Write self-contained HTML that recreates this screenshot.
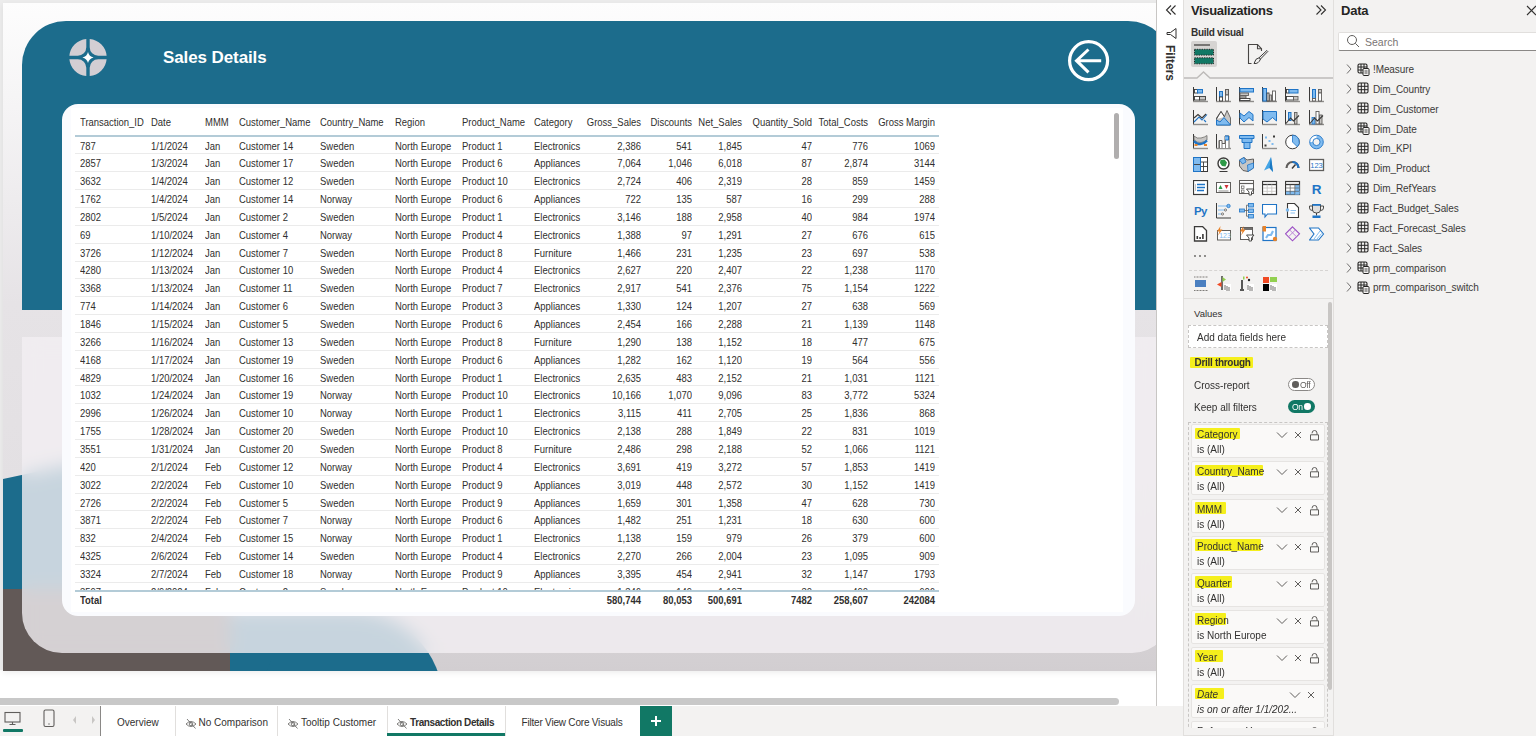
<!DOCTYPE html><html><head><meta charset='utf-8'><title>Sales Details</title><style>
*{margin:0;padding:0;box-sizing:border-box}
html,body{width:1536px;height:736px;overflow:hidden;background:#f3f2f1;font-family:"Liberation Sans",sans-serif;color:#252423}
.a{position:absolute}
.t{position:absolute;white-space:nowrap;line-height:1}
.c{position:absolute;white-space:nowrap;line-height:1;font-size:11px;color:#302f2e;transform:scaleX(.86);transform-origin:0 0}
.cr{position:absolute;white-space:nowrap;line-height:1;font-size:11px;color:#302f2e;transform:scaleX(.86);transform-origin:100% 0;text-align:right;width:100px}
.b{font-weight:bold}
</style></head><body>
<div class='a' style='left:0;top:0;width:1157px;height:706px;background:#ffffff;overflow:hidden'>
<div class='a' style='left:3px;top:3px;width:1188px;height:668px;box-shadow:-2px -2px 1px 1px rgba(0,0,0,0.075),0 2px 6px rgba(0,0,0,0.07)'></div>
<div class='a' id='page' style='left:3px;top:3px;width:1188px;height:668px;overflow:hidden;background:#fefefe'>
<div class='a' style='left:0;top:0;width:1188px;height:668px;background:linear-gradient(to bottom,#fdfdfd 0px,#e6e3e6 300px,#e3e0e3 480px,#d2ced1 668px)'></div>
<div class='a' style='left:19px;top:18px;width:1150px;height:289px;background:#1c6c8c;border-radius:44px 44px 0 0'></div>
<div class='a' style='left:0;top:476px;width:90px;height:125px;background:#1c6c8c;transform:skewY(-12deg);transform-origin:0 0'></div>
<div class='a' style='left:0;top:586px;width:227px;height:82px;background:#625957'></div>
<div class='a' style='left:227px;top:608px;width:125px;height:60px;background:#1c6c8c'></div>
<div class='a' style='left:258px;top:608px;width:182px;height:182px;background:#1c6c8c;border-radius:50%'></div>
<div class='a' style='left:19px;top:334px;width:1150px;height:316px;background:rgba(243,239,242,0.8);border-radius:0 0 40px 40px;backdrop-filter:blur(9px);-webkit-backdrop-filter:blur(9px)'></div>
<div class='a' style='left:59px;top:101px;width:1073px;height:512px;background:#fafbfe;border-radius:16px'></div>
<div class='a' style='left:68px;top:105px;width:1052px;height:504px;background:#ffffff'></div>
</div>
</div>
<svg class='a' style='left:66px;top:36px' width='44' height='44' viewBox='0 0 44 44'>
<path d='M20.30 2.88L20.30 11.30A8.5 8.5 0 0 1 11.80 19.80L3.38 19.80A18.7 18.7 0 0 1 20.30 2.88ZM23.70 2.88L23.70 11.30A8.5 8.5 0 0 0 32.20 19.80L40.62 19.80A18.7 18.7 0 0 0 23.70 2.88ZM23.70 40.12L23.70 31.70A8.5 8.5 0 0 1 32.20 23.20L40.62 23.20A18.7 18.7 0 0 1 23.70 40.12ZM20.30 40.12L20.30 31.70A8.5 8.5 0 0 0 11.80 23.20L3.38 23.20A18.7 18.7 0 0 0 20.30 40.12Z' fill='#d3ced3'/>
<path d='M22 15.9Q23.1 20.4 27.6 21.5Q23.1 22.6 22 27.1Q20.9 22.6 16.4 21.5Q20.9 20.4 22 15.9Z' fill='#ffffff'/>
</svg>
<div class='t' style='left:163px;top:49px;font-size:17px;font-weight:bold;color:#ffffff;letter-spacing:-0.1px'>Sales Details</div>
<svg class='a' style='left:1066px;top:38px' width='46' height='46' viewBox='0 0 46 46'>
<circle cx='22.6' cy='22.7' r='19' fill='none' stroke='#fff' stroke-width='3.2'/>
<path d='M10 22.7 H35.2 M22.5 11.5 L10.5 22.7 L22.5 34.3' fill='none' stroke='#fff' stroke-width='3'/>
</svg>
<div class='c' style='left:79.5px;top:117px'>Transaction_ID</div>
<div class='c' style='left:151px;top:117px'>Date</div>
<div class='c' style='left:204.5px;top:117px'>MMM</div>
<div class='c' style='left:239.4px;top:117px'>Customer_Name</div>
<div class='c' style='left:320.2px;top:117px'>Country_Name</div>
<div class='c' style='left:394.5px;top:117px'>Region</div>
<div class='c' style='left:461.8px;top:117px'>Product_Name</div>
<div class='c' style='left:534.3px;top:117px'>Category</div>
<div class='cr' style='left:541.2px;top:117px'>Gross_Sales</div>
<div class='cr' style='left:591.9px;top:117px'>Discounts</div>
<div class='cr' style='left:642.3px;top:117px'>Net_Sales</div>
<div class='cr' style='left:711.7px;top:117px'>Quantity_Sold</div>
<div class='cr' style='left:768.1px;top:117px'>Total_Costs</div>
<div class='cr' style='left:834.9px;top:117px'>Gross Margin</div>
<div class='a' style='left:75px;top:134.5px;width:864px;height:2px;background:#b3cbd7'></div>
<div class='a' style='left:0;top:136.5px;width:1000px;height:453.5px;overflow:hidden'>
<div class='c' style='left:79.5px;top:4.00px'>787</div>
<div class='c' style='left:151px;top:4.00px'>1/1/2024</div>
<div class='c' style='left:204.5px;top:4.00px'>Jan</div>
<div class='c' style='left:239.4px;top:4.00px'>Customer 14</div>
<div class='c' style='left:320.2px;top:4.00px'>Sweden</div>
<div class='c' style='left:394.5px;top:4.00px'>North Europe</div>
<div class='c' style='left:461.8px;top:4.00px'>Product 1</div>
<div class='c' style='left:534.3px;top:4.00px'>Electronics</div>
<div class='cr' style='left:541.2px;top:4.00px'>2,386</div>
<div class='cr' style='left:591.9px;top:4.00px'>541</div>
<div class='cr' style='left:642.3px;top:4.00px'>1,845</div>
<div class='cr' style='left:711.7px;top:4.00px'>47</div>
<div class='cr' style='left:768.1px;top:4.00px'>776</div>
<div class='cr' style='left:834.9px;top:4.00px'>1069</div>
<div class='a' style='left:75px;top:16.90px;width:864px;height:1px;background:#ebebeb'></div>
<div class='c' style='left:79.5px;top:21.85px'>2857</div>
<div class='c' style='left:151px;top:21.85px'>1/3/2024</div>
<div class='c' style='left:204.5px;top:21.85px'>Jan</div>
<div class='c' style='left:239.4px;top:21.85px'>Customer 17</div>
<div class='c' style='left:320.2px;top:21.85px'>Sweden</div>
<div class='c' style='left:394.5px;top:21.85px'>North Europe</div>
<div class='c' style='left:461.8px;top:21.85px'>Product 6</div>
<div class='c' style='left:534.3px;top:21.85px'>Appliances</div>
<div class='cr' style='left:541.2px;top:21.85px'>7,064</div>
<div class='cr' style='left:591.9px;top:21.85px'>1,046</div>
<div class='cr' style='left:642.3px;top:21.85px'>6,018</div>
<div class='cr' style='left:711.7px;top:21.85px'>87</div>
<div class='cr' style='left:768.1px;top:21.85px'>2,874</div>
<div class='cr' style='left:834.9px;top:21.85px'>3144</div>
<div class='a' style='left:75px;top:34.75px;width:864px;height:1px;background:#ebebeb'></div>
<div class='c' style='left:79.5px;top:39.70px'>3632</div>
<div class='c' style='left:151px;top:39.70px'>1/4/2024</div>
<div class='c' style='left:204.5px;top:39.70px'>Jan</div>
<div class='c' style='left:239.4px;top:39.70px'>Customer 12</div>
<div class='c' style='left:320.2px;top:39.70px'>Sweden</div>
<div class='c' style='left:394.5px;top:39.70px'>North Europe</div>
<div class='c' style='left:461.8px;top:39.70px'>Product 10</div>
<div class='c' style='left:534.3px;top:39.70px'>Electronics</div>
<div class='cr' style='left:541.2px;top:39.70px'>2,724</div>
<div class='cr' style='left:591.9px;top:39.70px'>406</div>
<div class='cr' style='left:642.3px;top:39.70px'>2,319</div>
<div class='cr' style='left:711.7px;top:39.70px'>28</div>
<div class='cr' style='left:768.1px;top:39.70px'>859</div>
<div class='cr' style='left:834.9px;top:39.70px'>1459</div>
<div class='a' style='left:75px;top:52.60px;width:864px;height:1px;background:#ebebeb'></div>
<div class='c' style='left:79.5px;top:57.55px'>1762</div>
<div class='c' style='left:151px;top:57.55px'>1/4/2024</div>
<div class='c' style='left:204.5px;top:57.55px'>Jan</div>
<div class='c' style='left:239.4px;top:57.55px'>Customer 14</div>
<div class='c' style='left:320.2px;top:57.55px'>Norway</div>
<div class='c' style='left:394.5px;top:57.55px'>North Europe</div>
<div class='c' style='left:461.8px;top:57.55px'>Product 6</div>
<div class='c' style='left:534.3px;top:57.55px'>Appliances</div>
<div class='cr' style='left:541.2px;top:57.55px'>722</div>
<div class='cr' style='left:591.9px;top:57.55px'>135</div>
<div class='cr' style='left:642.3px;top:57.55px'>587</div>
<div class='cr' style='left:711.7px;top:57.55px'>16</div>
<div class='cr' style='left:768.1px;top:57.55px'>299</div>
<div class='cr' style='left:834.9px;top:57.55px'>288</div>
<div class='a' style='left:75px;top:70.45px;width:864px;height:1px;background:#ebebeb'></div>
<div class='c' style='left:79.5px;top:75.40px'>2802</div>
<div class='c' style='left:151px;top:75.40px'>1/5/2024</div>
<div class='c' style='left:204.5px;top:75.40px'>Jan</div>
<div class='c' style='left:239.4px;top:75.40px'>Customer 2</div>
<div class='c' style='left:320.2px;top:75.40px'>Sweden</div>
<div class='c' style='left:394.5px;top:75.40px'>North Europe</div>
<div class='c' style='left:461.8px;top:75.40px'>Product 1</div>
<div class='c' style='left:534.3px;top:75.40px'>Electronics</div>
<div class='cr' style='left:541.2px;top:75.40px'>3,146</div>
<div class='cr' style='left:591.9px;top:75.40px'>188</div>
<div class='cr' style='left:642.3px;top:75.40px'>2,958</div>
<div class='cr' style='left:711.7px;top:75.40px'>40</div>
<div class='cr' style='left:768.1px;top:75.40px'>984</div>
<div class='cr' style='left:834.9px;top:75.40px'>1974</div>
<div class='a' style='left:75px;top:88.30px;width:864px;height:1px;background:#ebebeb'></div>
<div class='c' style='left:79.5px;top:93.25px'>69</div>
<div class='c' style='left:151px;top:93.25px'>1/10/2024</div>
<div class='c' style='left:204.5px;top:93.25px'>Jan</div>
<div class='c' style='left:239.4px;top:93.25px'>Customer 4</div>
<div class='c' style='left:320.2px;top:93.25px'>Norway</div>
<div class='c' style='left:394.5px;top:93.25px'>North Europe</div>
<div class='c' style='left:461.8px;top:93.25px'>Product 4</div>
<div class='c' style='left:534.3px;top:93.25px'>Electronics</div>
<div class='cr' style='left:541.2px;top:93.25px'>1,388</div>
<div class='cr' style='left:591.9px;top:93.25px'>97</div>
<div class='cr' style='left:642.3px;top:93.25px'>1,291</div>
<div class='cr' style='left:711.7px;top:93.25px'>27</div>
<div class='cr' style='left:768.1px;top:93.25px'>676</div>
<div class='cr' style='left:834.9px;top:93.25px'>615</div>
<div class='a' style='left:75px;top:106.15px;width:864px;height:1px;background:#ebebeb'></div>
<div class='c' style='left:79.5px;top:111.10px'>3726</div>
<div class='c' style='left:151px;top:111.10px'>1/12/2024</div>
<div class='c' style='left:204.5px;top:111.10px'>Jan</div>
<div class='c' style='left:239.4px;top:111.10px'>Customer 7</div>
<div class='c' style='left:320.2px;top:111.10px'>Sweden</div>
<div class='c' style='left:394.5px;top:111.10px'>North Europe</div>
<div class='c' style='left:461.8px;top:111.10px'>Product 8</div>
<div class='c' style='left:534.3px;top:111.10px'>Furniture</div>
<div class='cr' style='left:541.2px;top:111.10px'>1,466</div>
<div class='cr' style='left:591.9px;top:111.10px'>231</div>
<div class='cr' style='left:642.3px;top:111.10px'>1,235</div>
<div class='cr' style='left:711.7px;top:111.10px'>23</div>
<div class='cr' style='left:768.1px;top:111.10px'>697</div>
<div class='cr' style='left:834.9px;top:111.10px'>538</div>
<div class='a' style='left:75px;top:124.00px;width:864px;height:1px;background:#ebebeb'></div>
<div class='c' style='left:79.5px;top:128.95px'>4280</div>
<div class='c' style='left:151px;top:128.95px'>1/13/2024</div>
<div class='c' style='left:204.5px;top:128.95px'>Jan</div>
<div class='c' style='left:239.4px;top:128.95px'>Customer 10</div>
<div class='c' style='left:320.2px;top:128.95px'>Sweden</div>
<div class='c' style='left:394.5px;top:128.95px'>North Europe</div>
<div class='c' style='left:461.8px;top:128.95px'>Product 4</div>
<div class='c' style='left:534.3px;top:128.95px'>Electronics</div>
<div class='cr' style='left:541.2px;top:128.95px'>2,627</div>
<div class='cr' style='left:591.9px;top:128.95px'>220</div>
<div class='cr' style='left:642.3px;top:128.95px'>2,407</div>
<div class='cr' style='left:711.7px;top:128.95px'>22</div>
<div class='cr' style='left:768.1px;top:128.95px'>1,238</div>
<div class='cr' style='left:834.9px;top:128.95px'>1170</div>
<div class='a' style='left:75px;top:141.85px;width:864px;height:1px;background:#ebebeb'></div>
<div class='c' style='left:79.5px;top:146.80px'>3368</div>
<div class='c' style='left:151px;top:146.80px'>1/13/2024</div>
<div class='c' style='left:204.5px;top:146.80px'>Jan</div>
<div class='c' style='left:239.4px;top:146.80px'>Customer 11</div>
<div class='c' style='left:320.2px;top:146.80px'>Sweden</div>
<div class='c' style='left:394.5px;top:146.80px'>North Europe</div>
<div class='c' style='left:461.8px;top:146.80px'>Product 7</div>
<div class='c' style='left:534.3px;top:146.80px'>Electronics</div>
<div class='cr' style='left:541.2px;top:146.80px'>2,917</div>
<div class='cr' style='left:591.9px;top:146.80px'>541</div>
<div class='cr' style='left:642.3px;top:146.80px'>2,376</div>
<div class='cr' style='left:711.7px;top:146.80px'>75</div>
<div class='cr' style='left:768.1px;top:146.80px'>1,154</div>
<div class='cr' style='left:834.9px;top:146.80px'>1222</div>
<div class='a' style='left:75px;top:159.70px;width:864px;height:1px;background:#ebebeb'></div>
<div class='c' style='left:79.5px;top:164.65px'>774</div>
<div class='c' style='left:151px;top:164.65px'>1/14/2024</div>
<div class='c' style='left:204.5px;top:164.65px'>Jan</div>
<div class='c' style='left:239.4px;top:164.65px'>Customer 6</div>
<div class='c' style='left:320.2px;top:164.65px'>Sweden</div>
<div class='c' style='left:394.5px;top:164.65px'>North Europe</div>
<div class='c' style='left:461.8px;top:164.65px'>Product 3</div>
<div class='c' style='left:534.3px;top:164.65px'>Appliances</div>
<div class='cr' style='left:541.2px;top:164.65px'>1,330</div>
<div class='cr' style='left:591.9px;top:164.65px'>124</div>
<div class='cr' style='left:642.3px;top:164.65px'>1,207</div>
<div class='cr' style='left:711.7px;top:164.65px'>27</div>
<div class='cr' style='left:768.1px;top:164.65px'>638</div>
<div class='cr' style='left:834.9px;top:164.65px'>569</div>
<div class='a' style='left:75px;top:177.55px;width:864px;height:1px;background:#ebebeb'></div>
<div class='c' style='left:79.5px;top:182.50px'>1846</div>
<div class='c' style='left:151px;top:182.50px'>1/15/2024</div>
<div class='c' style='left:204.5px;top:182.50px'>Jan</div>
<div class='c' style='left:239.4px;top:182.50px'>Customer 5</div>
<div class='c' style='left:320.2px;top:182.50px'>Sweden</div>
<div class='c' style='left:394.5px;top:182.50px'>North Europe</div>
<div class='c' style='left:461.8px;top:182.50px'>Product 6</div>
<div class='c' style='left:534.3px;top:182.50px'>Appliances</div>
<div class='cr' style='left:541.2px;top:182.50px'>2,454</div>
<div class='cr' style='left:591.9px;top:182.50px'>166</div>
<div class='cr' style='left:642.3px;top:182.50px'>2,288</div>
<div class='cr' style='left:711.7px;top:182.50px'>21</div>
<div class='cr' style='left:768.1px;top:182.50px'>1,139</div>
<div class='cr' style='left:834.9px;top:182.50px'>1148</div>
<div class='a' style='left:75px;top:195.40px;width:864px;height:1px;background:#ebebeb'></div>
<div class='c' style='left:79.5px;top:200.35px'>3266</div>
<div class='c' style='left:151px;top:200.35px'>1/16/2024</div>
<div class='c' style='left:204.5px;top:200.35px'>Jan</div>
<div class='c' style='left:239.4px;top:200.35px'>Customer 13</div>
<div class='c' style='left:320.2px;top:200.35px'>Sweden</div>
<div class='c' style='left:394.5px;top:200.35px'>North Europe</div>
<div class='c' style='left:461.8px;top:200.35px'>Product 8</div>
<div class='c' style='left:534.3px;top:200.35px'>Furniture</div>
<div class='cr' style='left:541.2px;top:200.35px'>1,290</div>
<div class='cr' style='left:591.9px;top:200.35px'>138</div>
<div class='cr' style='left:642.3px;top:200.35px'>1,152</div>
<div class='cr' style='left:711.7px;top:200.35px'>18</div>
<div class='cr' style='left:768.1px;top:200.35px'>477</div>
<div class='cr' style='left:834.9px;top:200.35px'>675</div>
<div class='a' style='left:75px;top:213.25px;width:864px;height:1px;background:#ebebeb'></div>
<div class='c' style='left:79.5px;top:218.20px'>4168</div>
<div class='c' style='left:151px;top:218.20px'>1/17/2024</div>
<div class='c' style='left:204.5px;top:218.20px'>Jan</div>
<div class='c' style='left:239.4px;top:218.20px'>Customer 19</div>
<div class='c' style='left:320.2px;top:218.20px'>Sweden</div>
<div class='c' style='left:394.5px;top:218.20px'>North Europe</div>
<div class='c' style='left:461.8px;top:218.20px'>Product 6</div>
<div class='c' style='left:534.3px;top:218.20px'>Appliances</div>
<div class='cr' style='left:541.2px;top:218.20px'>1,282</div>
<div class='cr' style='left:591.9px;top:218.20px'>162</div>
<div class='cr' style='left:642.3px;top:218.20px'>1,120</div>
<div class='cr' style='left:711.7px;top:218.20px'>19</div>
<div class='cr' style='left:768.1px;top:218.20px'>564</div>
<div class='cr' style='left:834.9px;top:218.20px'>556</div>
<div class='a' style='left:75px;top:231.10px;width:864px;height:1px;background:#ebebeb'></div>
<div class='c' style='left:79.5px;top:236.05px'>4829</div>
<div class='c' style='left:151px;top:236.05px'>1/20/2024</div>
<div class='c' style='left:204.5px;top:236.05px'>Jan</div>
<div class='c' style='left:239.4px;top:236.05px'>Customer 16</div>
<div class='c' style='left:320.2px;top:236.05px'>Sweden</div>
<div class='c' style='left:394.5px;top:236.05px'>North Europe</div>
<div class='c' style='left:461.8px;top:236.05px'>Product 1</div>
<div class='c' style='left:534.3px;top:236.05px'>Electronics</div>
<div class='cr' style='left:541.2px;top:236.05px'>2,635</div>
<div class='cr' style='left:591.9px;top:236.05px'>483</div>
<div class='cr' style='left:642.3px;top:236.05px'>2,152</div>
<div class='cr' style='left:711.7px;top:236.05px'>21</div>
<div class='cr' style='left:768.1px;top:236.05px'>1,031</div>
<div class='cr' style='left:834.9px;top:236.05px'>1121</div>
<div class='a' style='left:75px;top:248.95px;width:864px;height:1px;background:#ebebeb'></div>
<div class='c' style='left:79.5px;top:253.90px'>1032</div>
<div class='c' style='left:151px;top:253.90px'>1/24/2024</div>
<div class='c' style='left:204.5px;top:253.90px'>Jan</div>
<div class='c' style='left:239.4px;top:253.90px'>Customer 19</div>
<div class='c' style='left:320.2px;top:253.90px'>Norway</div>
<div class='c' style='left:394.5px;top:253.90px'>North Europe</div>
<div class='c' style='left:461.8px;top:253.90px'>Product 10</div>
<div class='c' style='left:534.3px;top:253.90px'>Electronics</div>
<div class='cr' style='left:541.2px;top:253.90px'>10,166</div>
<div class='cr' style='left:591.9px;top:253.90px'>1,070</div>
<div class='cr' style='left:642.3px;top:253.90px'>9,096</div>
<div class='cr' style='left:711.7px;top:253.90px'>83</div>
<div class='cr' style='left:768.1px;top:253.90px'>3,772</div>
<div class='cr' style='left:834.9px;top:253.90px'>5324</div>
<div class='a' style='left:75px;top:266.80px;width:864px;height:1px;background:#ebebeb'></div>
<div class='c' style='left:79.5px;top:271.75px'>2996</div>
<div class='c' style='left:151px;top:271.75px'>1/26/2024</div>
<div class='c' style='left:204.5px;top:271.75px'>Jan</div>
<div class='c' style='left:239.4px;top:271.75px'>Customer 10</div>
<div class='c' style='left:320.2px;top:271.75px'>Norway</div>
<div class='c' style='left:394.5px;top:271.75px'>North Europe</div>
<div class='c' style='left:461.8px;top:271.75px'>Product 1</div>
<div class='c' style='left:534.3px;top:271.75px'>Electronics</div>
<div class='cr' style='left:541.2px;top:271.75px'>3,115</div>
<div class='cr' style='left:591.9px;top:271.75px'>411</div>
<div class='cr' style='left:642.3px;top:271.75px'>2,705</div>
<div class='cr' style='left:711.7px;top:271.75px'>25</div>
<div class='cr' style='left:768.1px;top:271.75px'>1,836</div>
<div class='cr' style='left:834.9px;top:271.75px'>868</div>
<div class='a' style='left:75px;top:284.65px;width:864px;height:1px;background:#ebebeb'></div>
<div class='c' style='left:79.5px;top:289.60px'>1755</div>
<div class='c' style='left:151px;top:289.60px'>1/28/2024</div>
<div class='c' style='left:204.5px;top:289.60px'>Jan</div>
<div class='c' style='left:239.4px;top:289.60px'>Customer 20</div>
<div class='c' style='left:320.2px;top:289.60px'>Sweden</div>
<div class='c' style='left:394.5px;top:289.60px'>North Europe</div>
<div class='c' style='left:461.8px;top:289.60px'>Product 10</div>
<div class='c' style='left:534.3px;top:289.60px'>Electronics</div>
<div class='cr' style='left:541.2px;top:289.60px'>2,138</div>
<div class='cr' style='left:591.9px;top:289.60px'>288</div>
<div class='cr' style='left:642.3px;top:289.60px'>1,849</div>
<div class='cr' style='left:711.7px;top:289.60px'>22</div>
<div class='cr' style='left:768.1px;top:289.60px'>831</div>
<div class='cr' style='left:834.9px;top:289.60px'>1019</div>
<div class='a' style='left:75px;top:302.50px;width:864px;height:1px;background:#ebebeb'></div>
<div class='c' style='left:79.5px;top:307.45px'>3551</div>
<div class='c' style='left:151px;top:307.45px'>1/31/2024</div>
<div class='c' style='left:204.5px;top:307.45px'>Jan</div>
<div class='c' style='left:239.4px;top:307.45px'>Customer 20</div>
<div class='c' style='left:320.2px;top:307.45px'>Sweden</div>
<div class='c' style='left:394.5px;top:307.45px'>North Europe</div>
<div class='c' style='left:461.8px;top:307.45px'>Product 8</div>
<div class='c' style='left:534.3px;top:307.45px'>Furniture</div>
<div class='cr' style='left:541.2px;top:307.45px'>2,486</div>
<div class='cr' style='left:591.9px;top:307.45px'>298</div>
<div class='cr' style='left:642.3px;top:307.45px'>2,188</div>
<div class='cr' style='left:711.7px;top:307.45px'>52</div>
<div class='cr' style='left:768.1px;top:307.45px'>1,066</div>
<div class='cr' style='left:834.9px;top:307.45px'>1121</div>
<div class='a' style='left:75px;top:320.35px;width:864px;height:1px;background:#ebebeb'></div>
<div class='c' style='left:79.5px;top:325.30px'>420</div>
<div class='c' style='left:151px;top:325.30px'>2/1/2024</div>
<div class='c' style='left:204.5px;top:325.30px'>Feb</div>
<div class='c' style='left:239.4px;top:325.30px'>Customer 12</div>
<div class='c' style='left:320.2px;top:325.30px'>Norway</div>
<div class='c' style='left:394.5px;top:325.30px'>North Europe</div>
<div class='c' style='left:461.8px;top:325.30px'>Product 4</div>
<div class='c' style='left:534.3px;top:325.30px'>Electronics</div>
<div class='cr' style='left:541.2px;top:325.30px'>3,691</div>
<div class='cr' style='left:591.9px;top:325.30px'>419</div>
<div class='cr' style='left:642.3px;top:325.30px'>3,272</div>
<div class='cr' style='left:711.7px;top:325.30px'>57</div>
<div class='cr' style='left:768.1px;top:325.30px'>1,853</div>
<div class='cr' style='left:834.9px;top:325.30px'>1419</div>
<div class='a' style='left:75px;top:338.20px;width:864px;height:1px;background:#ebebeb'></div>
<div class='c' style='left:79.5px;top:343.15px'>3022</div>
<div class='c' style='left:151px;top:343.15px'>2/2/2024</div>
<div class='c' style='left:204.5px;top:343.15px'>Feb</div>
<div class='c' style='left:239.4px;top:343.15px'>Customer 10</div>
<div class='c' style='left:320.2px;top:343.15px'>Sweden</div>
<div class='c' style='left:394.5px;top:343.15px'>North Europe</div>
<div class='c' style='left:461.8px;top:343.15px'>Product 9</div>
<div class='c' style='left:534.3px;top:343.15px'>Appliances</div>
<div class='cr' style='left:541.2px;top:343.15px'>3,019</div>
<div class='cr' style='left:591.9px;top:343.15px'>448</div>
<div class='cr' style='left:642.3px;top:343.15px'>2,572</div>
<div class='cr' style='left:711.7px;top:343.15px'>30</div>
<div class='cr' style='left:768.1px;top:343.15px'>1,152</div>
<div class='cr' style='left:834.9px;top:343.15px'>1419</div>
<div class='a' style='left:75px;top:356.05px;width:864px;height:1px;background:#ebebeb'></div>
<div class='c' style='left:79.5px;top:361.00px'>2726</div>
<div class='c' style='left:151px;top:361.00px'>2/2/2024</div>
<div class='c' style='left:204.5px;top:361.00px'>Feb</div>
<div class='c' style='left:239.4px;top:361.00px'>Customer 5</div>
<div class='c' style='left:320.2px;top:361.00px'>Sweden</div>
<div class='c' style='left:394.5px;top:361.00px'>North Europe</div>
<div class='c' style='left:461.8px;top:361.00px'>Product 9</div>
<div class='c' style='left:534.3px;top:361.00px'>Appliances</div>
<div class='cr' style='left:541.2px;top:361.00px'>1,659</div>
<div class='cr' style='left:591.9px;top:361.00px'>301</div>
<div class='cr' style='left:642.3px;top:361.00px'>1,358</div>
<div class='cr' style='left:711.7px;top:361.00px'>47</div>
<div class='cr' style='left:768.1px;top:361.00px'>628</div>
<div class='cr' style='left:834.9px;top:361.00px'>730</div>
<div class='a' style='left:75px;top:373.90px;width:864px;height:1px;background:#ebebeb'></div>
<div class='c' style='left:79.5px;top:378.85px'>3871</div>
<div class='c' style='left:151px;top:378.85px'>2/2/2024</div>
<div class='c' style='left:204.5px;top:378.85px'>Feb</div>
<div class='c' style='left:239.4px;top:378.85px'>Customer 7</div>
<div class='c' style='left:320.2px;top:378.85px'>Norway</div>
<div class='c' style='left:394.5px;top:378.85px'>North Europe</div>
<div class='c' style='left:461.8px;top:378.85px'>Product 6</div>
<div class='c' style='left:534.3px;top:378.85px'>Appliances</div>
<div class='cr' style='left:541.2px;top:378.85px'>1,482</div>
<div class='cr' style='left:591.9px;top:378.85px'>251</div>
<div class='cr' style='left:642.3px;top:378.85px'>1,231</div>
<div class='cr' style='left:711.7px;top:378.85px'>18</div>
<div class='cr' style='left:768.1px;top:378.85px'>630</div>
<div class='cr' style='left:834.9px;top:378.85px'>600</div>
<div class='a' style='left:75px;top:391.75px;width:864px;height:1px;background:#ebebeb'></div>
<div class='c' style='left:79.5px;top:396.70px'>832</div>
<div class='c' style='left:151px;top:396.70px'>2/4/2024</div>
<div class='c' style='left:204.5px;top:396.70px'>Feb</div>
<div class='c' style='left:239.4px;top:396.70px'>Customer 15</div>
<div class='c' style='left:320.2px;top:396.70px'>Norway</div>
<div class='c' style='left:394.5px;top:396.70px'>North Europe</div>
<div class='c' style='left:461.8px;top:396.70px'>Product 1</div>
<div class='c' style='left:534.3px;top:396.70px'>Electronics</div>
<div class='cr' style='left:541.2px;top:396.70px'>1,138</div>
<div class='cr' style='left:591.9px;top:396.70px'>159</div>
<div class='cr' style='left:642.3px;top:396.70px'>979</div>
<div class='cr' style='left:711.7px;top:396.70px'>26</div>
<div class='cr' style='left:768.1px;top:396.70px'>379</div>
<div class='cr' style='left:834.9px;top:396.70px'>600</div>
<div class='a' style='left:75px;top:409.60px;width:864px;height:1px;background:#ebebeb'></div>
<div class='c' style='left:79.5px;top:414.55px'>4325</div>
<div class='c' style='left:151px;top:414.55px'>2/6/2024</div>
<div class='c' style='left:204.5px;top:414.55px'>Feb</div>
<div class='c' style='left:239.4px;top:414.55px'>Customer 14</div>
<div class='c' style='left:320.2px;top:414.55px'>Sweden</div>
<div class='c' style='left:394.5px;top:414.55px'>North Europe</div>
<div class='c' style='left:461.8px;top:414.55px'>Product 4</div>
<div class='c' style='left:534.3px;top:414.55px'>Electronics</div>
<div class='cr' style='left:541.2px;top:414.55px'>2,270</div>
<div class='cr' style='left:591.9px;top:414.55px'>266</div>
<div class='cr' style='left:642.3px;top:414.55px'>2,004</div>
<div class='cr' style='left:711.7px;top:414.55px'>23</div>
<div class='cr' style='left:768.1px;top:414.55px'>1,095</div>
<div class='cr' style='left:834.9px;top:414.55px'>909</div>
<div class='a' style='left:75px;top:427.45px;width:864px;height:1px;background:#ebebeb'></div>
<div class='c' style='left:79.5px;top:432.40px'>3324</div>
<div class='c' style='left:151px;top:432.40px'>2/7/2024</div>
<div class='c' style='left:204.5px;top:432.40px'>Feb</div>
<div class='c' style='left:239.4px;top:432.40px'>Customer 18</div>
<div class='c' style='left:320.2px;top:432.40px'>Norway</div>
<div class='c' style='left:394.5px;top:432.40px'>North Europe</div>
<div class='c' style='left:461.8px;top:432.40px'>Product 9</div>
<div class='c' style='left:534.3px;top:432.40px'>Appliances</div>
<div class='cr' style='left:541.2px;top:432.40px'>3,395</div>
<div class='cr' style='left:591.9px;top:432.40px'>454</div>
<div class='cr' style='left:642.3px;top:432.40px'>2,941</div>
<div class='cr' style='left:711.7px;top:432.40px'>32</div>
<div class='cr' style='left:768.1px;top:432.40px'>1,147</div>
<div class='cr' style='left:834.9px;top:432.40px'>1793</div>
<div class='a' style='left:75px;top:445.30px;width:864px;height:1px;background:#ebebeb'></div>
<div class='c' style='left:79.5px;top:450.25px'>3597</div>
<div class='c' style='left:151px;top:450.25px'>2/9/2024</div>
<div class='c' style='left:204.5px;top:450.25px'>Feb</div>
<div class='c' style='left:239.4px;top:450.25px'>Customer 2</div>
<div class='c' style='left:320.2px;top:450.25px'>Sweden</div>
<div class='c' style='left:394.5px;top:450.25px'>North Europe</div>
<div class='c' style='left:461.8px;top:450.25px'>Product 10</div>
<div class='c' style='left:534.3px;top:450.25px'>Electronics</div>
<div class='cr' style='left:541.2px;top:450.25px'>1,346</div>
<div class='cr' style='left:591.9px;top:450.25px'>149</div>
<div class='cr' style='left:642.3px;top:450.25px'>1,197</div>
<div class='cr' style='left:711.7px;top:450.25px'>30</div>
<div class='cr' style='left:768.1px;top:450.25px'>490</div>
<div class='cr' style='left:834.9px;top:450.25px'>606</div>
<div class='a' style='left:75px;top:463.15px;width:864px;height:1px;background:#ebebeb'></div>
</div>
<div class='a' style='left:75px;top:590px;width:864px;height:2px;background:#b3cbd7'></div>
<div class='c b' style='left:80px;top:595px'>Total</div>
<div class='cr b' style='left:541.2px;top:595px'>580,744</div>
<div class='cr b' style='left:591.9px;top:595px'>80,053</div>
<div class='cr b' style='left:642.3px;top:595px'>500,691</div>
<div class='cr b' style='left:711.7px;top:595px'>7482</div>
<div class='cr b' style='left:768.1px;top:595px'>258,607</div>
<div class='cr b' style='left:834.9px;top:595px'>242084</div>
<div class='a' style='left:1114px;top:113px;width:5px;height:46px;background:#b0aeae;border-radius:3px'></div>
<div class='a' style='left:0;top:698px;width:1119px;height:7px;background:#c8c8c8;border-radius:0 4px 4px 0'></div>
<div class='a' style='left:1156px;top:0;width:28px;height:706px;background:#ffffff;border-left:1px solid #c8c6c4'></div>
<svg class='a' style='left:1164px;top:4px' width='14' height='12' viewBox='0 0 14 12'><path d='M7 1.5 L2.5 6 L7 10.5 M11.5 1.5 L7 6 L11.5 10.5' fill='none' stroke='#323130' stroke-width='1.1'/></svg>
<svg class='a' style='left:1164px;top:27px' width='14' height='13' viewBox='0 0 14 13'><path d='M12 1.5 V11.5 L6.5 7.5 H3 V5.5 H6.5 Z' fill='none' stroke='#323130' stroke-width='1' stroke-linejoin='round'/></svg>
<div class='t' style='left:1163px;top:45px;font-size:12px;font-weight:bold;color:#323130;transform:rotate(90deg) translate(0,-13px);transform-origin:0 0'>Filters</div>
<div class='a' style='left:1183px;top:0;width:151px;height:736px;background:#f3f2f1;border-left:1px solid #e1dfdd;border-right:1px solid #e1dfdd'></div>
<div class='t' style='left:1191px;top:4px;font-size:13px;font-weight:bold;color:#252423;letter-spacing:-0.35px'>Visualizations</div>
<svg class='a' style='left:1314px;top:4px' width='14' height='12' viewBox='0 0 14 12'><path d='M2.5 1.5 L7 6 L2.5 10.5 M7 1.5 L11.5 6 L7 10.5' fill='none' stroke='#323130' stroke-width='1.1'/></svg>
<div class='t' style='left:1191px;top:28px;font-size:10px;font-weight:bold;color:#323130;letter-spacing:-0.3px'>Build visual</div>
<div class='a' style='left:1191px;top:41px;width:26px;height:26px;background:#d6d4d2;border-radius:2px'></div>
<svg class='a' style='left:1193px;top:43px' width='22' height='22' viewBox='0 0 22 22'>
<rect x='1' y='1.2' width='16' height='1.6' fill='#605e5c'/>
<rect x='1.5' y='6.3' width='19' height='5.8' fill='#117865' stroke='#252423' stroke-width='1' stroke-dasharray='1.2 1.2'/>
<rect x='1.5' y='14.8' width='19' height='6' fill='#117865' stroke='#252423' stroke-width='1' stroke-dasharray='1.2 1.2'/>
</svg>
<svg class='a' style='left:1246px;top:43px' width='24' height='23' viewBox='0 0 24 23'>
<path d='M5.5 20.5 H2.5 V1.5 H11.5 L15.5 5.8 V8' fill='none' stroke='#484644' stroke-width='1.1'/>
<path d='M11.5 1.5 V5.8 H15.5' fill='none' stroke='#484644' stroke-width='1.1'/>
<path d='M21.8 8.5 L14.5 16 L13 14.8 L20.8 7.5 Z' fill='#f3f2f1' stroke='#3b3a39' stroke-width='1'/>
<path d='M13 14.8 Q9.5 15 8 20.5 Q12.5 21.2 14.5 16 Z' fill='#f3f2f1' stroke='#3b3a39' stroke-width='1'/>
</svg>
<svg class='a' style='left:1184px;top:70px' width='149' height='10' viewBox='0 0 149 10'>
<path d='M0 8 H13 L19.5 2 L26 8 H149' fill='none' stroke='#bdbbb9' stroke-width='1.4'/></svg>
<svg class='a' style='left:1193px;top:87px' width='16' height='16' viewBox='0 0 16 16'><path d='M.5 0V15' stroke='#3b3a39' stroke-width='1'/><path d='M0 14.5H15' stroke='#8f8d8b' stroke-width='1.4'/><rect x='1.5' y='2.5' width='3' height='3.5' fill='#ffffff' stroke='#3b3a39' stroke-width='0.9'/><rect x='4.5' y='2.5' width='5' height='3.5' fill='#80bbef' stroke='#1f74c6' stroke-width='1'/><rect x='1.5' y='9.5' width='5' height='3.5' fill='#ffffff' stroke='#3b3a39' stroke-width='0.9'/><rect x='6.5' y='9.5' width='6' height='3.5' fill='#c8c6c4' stroke='#3b3a39' stroke-width='0.9'/></svg>
<svg class='a' style='left:1216px;top:87px' width='16' height='16' viewBox='0 0 16 16'><path d='M.5 0V15' stroke='#3b3a39' stroke-width='1'/><path d='M0 14.5H15' stroke='#8f8d8b' stroke-width='1.4'/><rect x='3.5' y='4.5' width='3' height='5.5' fill='#80bbef' stroke='#1f74c6' stroke-width='1'/><rect x='3.5' y='10' width='3' height='4' fill='#ffffff' stroke='#3b3a39' stroke-width='0.9'/><rect x='9.5' y='2.5' width='3' height='5.5' fill='#c8c6c4' stroke='#605e5c' stroke-width='1'/><rect x='9.5' y='8' width='3' height='6' fill='#ffffff' stroke='#605e5c' stroke-width='0.9'/></svg>
<svg class='a' style='left:1239px;top:87px' width='16' height='16' viewBox='0 0 16 16'><path d='M.5 0V15' stroke='#3b3a39' stroke-width='1'/><path d='M0 14.5H15' stroke='#8f8d8b' stroke-width='1.4'/><rect x='1' y='1.5' width='13.5' height='3.5' fill='#80bbef' stroke='#1f74c6' stroke-width='1'/><rect x='1' y='6' width='8.5' height='2.5' fill='#c8c6c4' stroke='#605e5c' stroke-width='0.9'/><rect x='1' y='9' width='6' height='2' fill='#c8c6c4' stroke='#605e5c' stroke-width='0.9'/><rect x='1' y='11.5' width='10' height='2' fill='#ffffff' stroke='#3b3a39' stroke-width='0.9'/></svg>
<svg class='a' style='left:1262px;top:87px' width='16' height='16' viewBox='0 0 16 16'><path d='M.5 0V15' stroke='#3b3a39' stroke-width='1'/><path d='M0 14.5H15' stroke='#8f8d8b' stroke-width='1.4'/><rect x='1' y='1.5' width='3.5' height='12.5' fill='#80bbef' stroke='#1f74c6' stroke-width='1'/><rect x='5' y='6' width='2' height='8' fill='#ffffff' stroke='#3b3a39' stroke-width='0.9'/><rect x='7.5' y='8' width='2' height='6' fill='#c8c6c4' stroke='#605e5c' stroke-width='0.9'/><rect x='10.5' y='4' width='3' height='10' fill='#ffffff' stroke='#605e5c' stroke-width='0.9'/></svg>
<svg class='a' style='left:1285px;top:87px' width='16' height='16' viewBox='0 0 16 16'><path d='M.5 0V15' stroke='#3b3a39' stroke-width='1'/><path d='M0 14.5H15' stroke='#8f8d8b' stroke-width='1.4'/><rect x='1.5' y='2.5' width='2.5' height='3.5' fill='#ffffff' stroke='#3b3a39' stroke-width='0.9'/><rect x='4' y='2.5' width='9' height='3.5' fill='#80bbef' stroke='#1f74c6' stroke-width='1'/><rect x='1.5' y='9.5' width='7' height='3.5' fill='#ffffff' stroke='#3b3a39' stroke-width='0.9'/><rect x='8.5' y='9.5' width='4.5' height='3.5' fill='#c8c6c4' stroke='#605e5c' stroke-width='0.9'/></svg>
<svg class='a' style='left:1309px;top:87px' width='16' height='16' viewBox='0 0 16 16'><path d='M.5 0V15' stroke='#3b3a39' stroke-width='1'/><path d='M0 14.5H15' stroke='#8f8d8b' stroke-width='1.4'/><rect x='3.5' y='2.5' width='3' height='9' fill='#80bbef' stroke='#1f74c6' stroke-width='1'/><rect x='3.5' y='11.5' width='3' height='2.5' fill='#ffffff' stroke='#605e5c' stroke-width='0.9'/><rect x='9.5' y='2.5' width='3' height='3.5' fill='#c8c6c4' stroke='#605e5c' stroke-width='0.9'/><rect x='9.5' y='6' width='3' height='8' fill='#ffffff' stroke='#605e5c' stroke-width='0.9'/></svg>
<svg class='a' style='left:1193px;top:110px' width='16' height='16' viewBox='0 0 16 16'><path d='M.5 0V15' stroke='#3b3a39' stroke-width='1'/><path d='M0 14.5H15' stroke='#8f8d8b' stroke-width='1.4'/><path d='M1 12 L6 7 L9 10 L14 4.5' stroke='#1f74c6' stroke-width='1.1' fill='none'/><path d='M1 8 L5 4.5 L9 8 L13 4' stroke='#3b3a39' stroke-width='1.1' fill='none'/><path d='M11 10 L13 12' stroke='#1f74c6' stroke-width='1.1'/></svg>
<svg class='a' style='left:1216px;top:110px' width='16' height='16' viewBox='0 0 16 16'><path d='M0.5 15V8 L5 1.5 L8.5 6.5 L11 0.5 L14.5 8 V15Z' fill='#c8c6c4' stroke='#605e5c' stroke-width='.9'/><path d='M0.5 9 L5 1.5 L8.5 7' fill='#ffffff' stroke='#3b3a39' stroke-width='.9'/><path d='M0.5 15V10 L4 12 L8 7.5 L14.5 15Z' fill='#80bbef' stroke='#1f74c6' stroke-width='1'/></svg>
<svg class='a' style='left:1239px;top:110px' width='16' height='16' viewBox='0 0 16 16'><path d='M.5 0V15' stroke='#3b3a39' stroke-width='1'/><path d='M0 14.5H15' stroke='#8f8d8b' stroke-width='1.4'/><path d='M1 3 L5 6 L10 1.5 L14 4.5 V11 L10 7.5 L5 12 L1 8Z' fill='#80bbef' stroke='#1f74c6' stroke-width='1'/></svg>
<svg class='a' style='left:1262px;top:110px' width='16' height='16' viewBox='0 0 16 16'><path d='M.5 0V15' stroke='#3b3a39' stroke-width='1'/><path d='M0 14.5H15' stroke='#8f8d8b' stroke-width='1.4'/><path d='M1 1.5 H14.5 V11 L10.5 7.5 L5 12 L1 9Z' fill='#80bbef' stroke='#1f74c6' stroke-width='1'/></svg>
<svg class='a' style='left:1285px;top:110px' width='16' height='16' viewBox='0 0 16 16'><path d='M.5 0V15' stroke='#3b3a39' stroke-width='1'/><path d='M0 14.5H15' stroke='#8f8d8b' stroke-width='1.4'/><rect x='3.5' y='2.5' width='2.5' height='8' fill='#80bbef' stroke='#1f74c6' stroke-width='1'/><rect x='9.5' y='2.5' width='2.5' height='11.5' fill='#c8c6c4' stroke='#605e5c' stroke-width='0.9'/><path d='M1 13.5 L5.5 8 L8.5 11 L14 5.5' stroke='#3b3a39' stroke-width='1.1' fill='none'/></svg>
<svg class='a' style='left:1309px;top:110px' width='16' height='16' viewBox='0 0 16 16'><path d='M.5 0V15' stroke='#3b3a39' stroke-width='1'/><path d='M0 14.5H15' stroke='#8f8d8b' stroke-width='1.4'/><rect x='3' y='7.5' width='3' height='6.5' fill='#80bbef' stroke='#1f74c6' stroke-width='0.8'/><rect x='7' y='1.5' width='3' height='12.5' fill='#ffffff' stroke='#605e5c' stroke-width='0.9'/><rect x='10.5' y='5' width='2.5' height='9' fill='#c8c6c4' stroke='#605e5c' stroke-width='0.9'/><path d='M1 13.5 L5.5 8 L8.5 11 L14 5.5' stroke='#3b3a39' stroke-width='1.1' fill='none'/></svg>
<svg class='a' style='left:1193px;top:134px' width='16' height='16' viewBox='0 0 16 16'><path d='M.5 0V15' stroke='#3b3a39' stroke-width='1'/><path d='M0 14.5H15' stroke='#8f8d8b' stroke-width='1.4'/><path d='M1 2 Q4 5 8 4 Q12 3 14 1.5 V6 Q12 8 8 8.5 Q4 9 1 6Z' fill='#c8c6c4' stroke='#605e5c' stroke-width='.7'/><path d='M1 7 Q4 11 8 10 Q12 9 14 6.5' stroke='#1f74c6' stroke-width='2.2' fill='none'/><rect x='1.5' y='10' width='3' height='2' fill='#e8832a'/><rect x='11' y='10' width='3' height='2' fill='#e8832a'/></svg>
<svg class='a' style='left:1216px;top:134px' width='16' height='16' viewBox='0 0 16 16'><path d='M.5 0V15' stroke='#3b3a39' stroke-width='1'/><path d='M0 14.5H15' stroke='#8f8d8b' stroke-width='1.4'/><path d='M3 14V6.5H6V9.5H9V2H13V14' stroke='#605e5c' stroke-width='1' fill='#ffffff'/><path d='M9 2H12.5V6H9' stroke='#1f74c6' stroke-width='1' fill='#80bbef'/><path d='M3.5 14V7M6 14V9.5M9.5 14V6' stroke='#605e5c' stroke-width='.8'/></svg>
<svg class='a' style='left:1239px;top:134px' width='16' height='16' viewBox='0 0 16 16'><path d='M0.5 1.5H15V4.5H13V8.5H11V14.5H5V8.5H3V4.5H.5Z' fill='#80bbef' stroke='#1f74c6' stroke-width='1'/><path d='M3 4.5H13M5 8.5H11' stroke='#1f74c6' stroke-width='.9'/></svg>
<svg class='a' style='left:1262px;top:134px' width='16' height='16' viewBox='0 0 16 16'><path d='M.5 0V15' stroke='#3b3a39' stroke-width='1'/><path d='M0 14.5H15' stroke='#8f8d8b' stroke-width='1.4'/><rect x='3' y='2.5' width='2' height='2' fill='#80bbef'/><rect x='6.5' y='6' width='2' height='2' fill='#80bbef'/><rect x='9.5' y='9' width='2' height='2' fill='#80bbef'/><rect x='11' y='1.5' width='2' height='2' fill='#3b3a39'/><rect x='2.5' y='10.5' width='2' height='2' fill='#3b3a39'/></svg>
<svg class='a' style='left:1285px;top:134px' width='16' height='16' viewBox='0 0 16 16'><circle cx='7.5' cy='8' r='6.8' fill='#ffffff' stroke='#3b3a39' stroke-width='1'/><path d='M7.5 1.2 A6.8 6.8 0 0 1 12.3 12.8 L7.5 8Z' fill='#80bbef' stroke='#1f74c6' stroke-width='.8'/></svg>
<svg class='a' style='left:1309px;top:134px' width='16' height='16' viewBox='0 0 16 16'><circle cx='7.5' cy='8' r='5.2' fill='none' stroke='#ffffff' stroke-width='3.2'/><path d='M7.5 2.8 A5.2 5.2 0 1 1 2.3 8' fill='none' stroke='#80bbef' stroke-width='3.2'/><circle cx='7.5' cy='8' r='6.8' fill='none' stroke='#1f74c6' stroke-width='.9'/><circle cx='7.5' cy='8' r='3.6' fill='none' stroke='#1f74c6' stroke-width='.9'/></svg>
<svg class='a' style='left:1193px;top:157px' width='16' height='16' viewBox='0 0 16 16'><rect x='.5' y='.5' width='14' height='14' fill='#ffffff' stroke='#3b3a39'/><rect x='1' y='1' width='6.5' height='13.5' fill='#80bbef'/><path d='M.5 7.5H7.5M7.5 .5V14.5M7.5 5H14.5M10.5 5V14.5M7.5 9.5H14.5' stroke='#3b3a39' stroke-width='.9'/><rect x='.5' y='.5' width='7' height='14' fill='none' stroke='#1f74c6'/></svg>
<svg class='a' style='left:1216px;top:157px' width='16' height='16' viewBox='0 0 16 16'><circle cx='7.5' cy='6.5' r='5.5' fill='#ffffff' stroke='#3b3a39' stroke-width='1.4'/><path d='M4.5 3 L8.5 2.5 L11 5.5 L9.5 9.5 L6 9 L4 6Z' fill='#2e9b48'/><path d='M3.5 14.5H11.5' stroke='#3b3a39' stroke-width='1'/></svg>
<svg class='a' style='left:1239px;top:157px' width='16' height='16' viewBox='0 0 16 16'><path d='M.5 3 L5 .5 L8 3 L14.5 2 V11 L9 14.5 L4 13.5 L.5 9Z' fill='#c8c6c4' stroke='#605e5c' stroke-width='1'/><path d='M.5 3 L5 .5 L7 5 L3.5 7Z M8.5 8 L14.5 6 V11 L9 14.5Z' fill='#80bbef' stroke='#1f74c6' stroke-width='.8'/></svg>
<svg class='a' style='left:1262px;top:157px' width='16' height='16' viewBox='0 0 16 16'><path d='M9 0 L11 15 L7.5 11 L2 13.5Z' fill='#45a5e6'/><path d='M9 0 L11 15 L7.5 11Z' fill='#1a78c2'/></svg>
<svg class='a' style='left:1285px;top:157px' width='16' height='16' viewBox='0 0 16 16'><path d='M1.5 11 A6 6 0 0 1 13.5 11' fill='none' stroke='#605e5c' stroke-width='2.2'/><path d='M7.5 5 A6 6 0 0 1 13.5 11' fill='none' stroke='#1f74c6' stroke-width='2.2'/><path d='M7 11.5 L10.5 7.5' stroke='#3b3a39' stroke-width='1.5'/></svg>
<svg class='a' style='left:1309px;top:157px' width='16' height='16' viewBox='0 0 16 16'><rect x='.5' y='2.5' width='14' height='11' fill='#ffffff' stroke='#605e5c' stroke-width='1.3'/><text x='7.5' y='11' font-size='7.5' text-anchor='middle' fill='#1f74c6' font-family='Liberation Sans'>123</text></svg>
<svg class='a' style='left:1193px;top:180px' width='16' height='16' viewBox='0 0 16 16'><rect x='.5' y='.5' width='14' height='14' fill='#ffffff' stroke='#3b3a39' stroke-width='1.2'/><path d='M4 4.5H12M4 7.5H12M4 10.5H11' stroke='#1f74c6' stroke-width='1.3'/><path d='M2.5 4V11' stroke='#c8c6c4' stroke-width='1'/></svg>
<svg class='a' style='left:1216px;top:180px' width='16' height='16' viewBox='0 0 16 16'><rect x='.5' y='2.5' width='14' height='10' fill='#ffffff' stroke='#605e5c' stroke-width='1'/><path d='M2.5 9 L4.5 5 L6.5 9Z' fill='#2e9b48'/><path d='M8.5 5 L12.5 5 L10.5 9Z' fill='#d13438'/><path d='M2.5 11H12.5' stroke='#605e5c' stroke-width='.7'/></svg>
<svg class='a' style='left:1239px;top:180px' width='16' height='16' viewBox='0 0 16 16'><rect x='.5' y='.5' width='14' height='13' fill='#ffffff' stroke='#605e5c' stroke-width='1'/><path d='M.5 3.5H14.5' stroke='#605e5c' stroke-width='1.2'/><rect x='2.5' y='6' width='2.5' height='2.5' fill='none' stroke='#605e5c' stroke-width='.7'/><rect x='2.5' y='10' width='2.5' height='2.5' fill='none' stroke='#605e5c' stroke-width='.7'/><path d='M7.5 9H15L12.5 12V15H10V12Z' fill='#ffffff' stroke='#3b3a39' stroke-width='.9'/></svg>
<svg class='a' style='left:1262px;top:180px' width='16' height='16' viewBox='0 0 16 16'><rect x='.5' y='1.5' width='14' height='13' fill='#ffffff' stroke='#3b3a39' stroke-width='1.2'/><path d='M.5 4.5H14.5' stroke='#3b3a39' stroke-width='1.3'/><path d='M1 8H14M1 11.3H14M5.2 4.5V14M9.8 4.5V14' stroke='#c8c6c4' stroke-width='.9'/></svg>
<svg class='a' style='left:1285px;top:180px' width='16' height='16' viewBox='0 0 16 16'><rect x='.5' y='1.5' width='14' height='13' fill='#ffffff' stroke='#3b3a39' stroke-width='1.2'/><rect x='1' y='11' width='13.5' height='3.5' fill='#80bbef'/><rect x='10' y='4.5' width='4.5' height='10' fill='#80bbef'/><path d='M.5 4.5H14.5' stroke='#3b3a39' stroke-width='1.3'/><path d='M1 8H14M1 11.3H14M5.2 4.5V14M9.8 4.5V14' stroke='#605e5c' stroke-width='.7'/></svg>
<svg class='a' style='left:1309px;top:180px' width='16' height='16' viewBox='0 0 16 16'><text x='7.5' y='13.5' font-size='13.5' font-weight='bold' text-anchor='middle' fill='#1f74c6' font-family='Liberation Sans'>R</text></svg>
<svg class='a' style='left:1193px;top:203px' width='16' height='16' viewBox='0 0 16 16'><text x='7.5' y='12' font-size='11.5' font-weight='bold' text-anchor='middle' fill='#1f74c6' font-family='Liberation Sans' letter-spacing='-.5'>Py</text></svg>
<svg class='a' style='left:1216px;top:203px' width='16' height='16' viewBox='0 0 16 16'><path d='M.5 0V15H15' stroke='#3b3a39' fill='none'/><path d='M2 3H11M2 7H8M2 11H5' stroke='#80bbef' stroke-width='1'/><circle cx='12.5' cy='3' r='1.7' fill='#80bbef' stroke='#1f74c6' stroke-width='.8'/><circle cx='9.5' cy='7' r='1.1' fill='none' stroke='#605e5c' stroke-width='.8'/><circle cx='6.5' cy='11' r='1.1' fill='none' stroke='#605e5c' stroke-width='.8'/></svg>
<svg class='a' style='left:1239px;top:203px' width='16' height='16' viewBox='0 0 16 16'><rect x='0.5' y='6' width='5' height='3' fill='#80bbef' stroke='#1f74c6' stroke-width='.8'/><rect x='9.5' y='.5' width='5' height='3.5' fill='#80bbef' stroke='#1f74c6' stroke-width='.8'/><rect x='9.5' y='6' width='5' height='3.5' fill='#80bbef' stroke='#1f74c6' stroke-width='.8'/><rect x='9.5' y='11.5' width='5' height='3.5' fill='#80bbef' stroke='#1f74c6' stroke-width='.8'/><path d='M5.5 7.5H7.5M7.5 2.2V13.2M7.5 2.2H9.5M7.5 13.2H9.5M7.5 7.5H9.5' stroke='#605e5c' stroke-width='.8'/></svg>
<svg class='a' style='left:1262px;top:203px' width='16' height='16' viewBox='0 0 16 16'><path d='M.5 1.5H14.5V11H5.5L3 14V11H.5Z' fill='#ffffff' stroke='#1f74c6' stroke-width='1.1'/></svg>
<svg class='a' style='left:1285px;top:203px' width='16' height='16' viewBox='0 0 16 16'><path d='M2.5 .5H9.5L13.5 4.5V14.5H2.5Z' fill='#ffffff' stroke='#3b3a39' stroke-width='1.1'/><circle cx='2.5' cy='7' r='1.8' fill='#80bbef'/><path d='M5.5 7.5H11M5.5 10H10' stroke='#80bbef' stroke-width='.9'/></svg>
<svg class='a' style='left:1309px;top:203px' width='16' height='16' viewBox='0 0 16 16'><path d='M3.5 1.5H11.5V7 Q11.5 10 7.5 10 Q3.5 10 3.5 7Z' fill='#e1dfdd' stroke='#3b3a39' stroke-width='.9'/><path d='M3.5 3H.5V5 Q.5 7.5 3.5 7.5M11.5 3H14.5V5 Q14.5 7.5 11.5 7.5' fill='none' stroke='#3b3a39' stroke-width='.9'/><rect x='3.5' y='1' width='8' height='1.8' fill='#1f74c6'/><path d='M7.5 10V12.5' stroke='#3b3a39'/><rect x='3.5' y='12.5' width='8' height='2.5' fill='#1f74c6'/></svg>
<svg class='a' style='left:1193px;top:226px' width='16' height='16' viewBox='0 0 16 16'><path d='M1.5 .5H9.5L13.5 4.5V15H1.5Z' fill='#ffffff' stroke='#3b3a39' stroke-width='1.3'/><rect x='3.5' y='10' width='1.6' height='3' fill='#3b3a39'/><rect x='6.3' y='11' width='1.6' height='2' fill='#3b3a39'/><rect x='9.1' y='8' width='1.6' height='5' fill='#3b3a39'/></svg>
<svg class='a' style='left:1216px;top:226px' width='16' height='16' viewBox='0 0 16 16'><rect x='1.5' y='4.5' width='13' height='9.5' fill='#ffffff' stroke='#605e5c' stroke-width='1'/><text x='9' y='12' font-size='7' text-anchor='middle' fill='#80bbef' font-family='Liberation Sans'>123</text><path d='M4.5 0 L1 5.5 H3.5 L2 9.5 L6.5 3.5 H4Z' fill='#e8832a'/></svg>
<svg class='a' style='left:1239px;top:226px' width='16' height='16' viewBox='0 0 16 16'><rect x='1.5' y='1.5' width='12' height='12' fill='#ffffff' stroke='#605e5c' stroke-width='1'/><path d='M4.5 3H13.5' stroke='#605e5c' stroke-width='1.8'/><path d='M7.5 9H15L12.5 12V15H10V12Z' fill='#ffffff' stroke='#3b3a39' stroke-width='.9'/><path d='M4.5 0 L1 5.5 H3.5 L2 9.5 L6.5 3.5 H4Z' fill='#e8832a'/></svg>
<svg class='a' style='left:1262px;top:226px' width='16' height='16' viewBox='0 0 16 16'><rect x='1' y='1.5' width='13' height='13' fill='#ffffff' stroke='#1f74c6' stroke-width='1.2'/><path d='M4 12 L6 9 L9 9 L11 5' stroke='#80bbef' stroke-width='2.2' fill='none'/><rect x='.5' y='0' width='3.5' height='5.5' fill='#e8832a'/><circle cx='13' cy='13' r='2.2' fill='#e8832a'/></svg>
<svg class='a' style='left:1285px;top:226px' width='16' height='16' viewBox='0 0 16 16'><path d='M7.5 .8 L14.5 7.8 L7.5 14.8 L.5 7.8Z' fill='none' stroke='#9b4fc4' stroke-width='1.1'/><path d='M4.5 3.8 L11.5 10.8 M10.5 3.8 L3.5 10.8' stroke='#b77dd6' stroke-width='.9'/></svg>
<svg class='a' style='left:1309px;top:226px' width='16' height='16' viewBox='0 0 16 16'><path d='M.5 2H9.5L14.5 8L9.5 14H.5L5 8Z' fill='#ffffff' stroke='#1f74c6' stroke-width='1.1'/><path d='M5 13 L11 5M8 13 L12.5 7.5' stroke='#80bbef' stroke-width='1'/></svg>
<svg class='a' style='left:1193px;top:254px' width='16' height='4' viewBox='0 0 16 4'><circle cx='2' cy='2' r='0.9' fill='#605e5c'/><circle cx='7' cy='2' r='0.9' fill='#605e5c'/><circle cx='12' cy='2' r='0.9' fill='#605e5c'/></svg>
<div class='a' style='left:1189px;top:270px;width:139px;height:0;border-top:1px dashed #d6d4d2'></div>
<svg class='a' style='left:1193px;top:276px' width='16' height='16' viewBox='0 0 16 16'><path d='M1 1H15' stroke='#605e5c' stroke-width='.8' stroke-dasharray='1 .5'/><rect x='2' y='4' width='11' height='7' fill='#4a7fc0'/><path d='M1 14.5H15' stroke='#605e5c' stroke-width='.8' stroke-dasharray='1 .5'/></svg>
<svg class='a' style='left:1216px;top:276px' width='16' height='16' viewBox='0 0 16 16'><path d='M6 0V14' stroke='#252423' stroke-width='1.3'/><path d='M6.5 1L10 3.5L6.5 6Z' fill='#92d050'/><path d='M5.5 6L1 8.5L5.5 11Z' fill='#f04a24'/><rect x='8' y='8' width='7' height='7' fill='#fff'/><path d='M9 9V14M11 10V15M13 11V15' stroke='#605e5c' stroke-width='.9'/></svg>
<svg class='a' style='left:1239px;top:276px' width='16' height='16' viewBox='0 0 16 16'><path d='M3 4V13M1 14H5' stroke='#252423' stroke-width='1.5'/><rect x='4' y='0.5' width='1.5' height='3' fill='#92d050'/><circle cx='8' cy='1.5' r='1' fill='#f04a24'/><circle cx='10' cy='4' r='1.2' fill='#252423'/><rect x='8' y='8' width='7' height='7' fill='#fff'/><path d='M9 9V14M11 10V15M13 11V15' stroke='#605e5c' stroke-width='.9'/></svg>
<svg class='a' style='left:1262px;top:276px' width='16' height='16' viewBox='0 0 16 16'><rect x='1' y='1' width='6' height='6' fill='#f04a24'/><rect x='8' y='1' width='7' height='5' fill='#92d050'/><rect x='1' y='8' width='6' height='7' fill='#000'/><rect x='8' y='8' width='7' height='7' fill='#fff'/><path d='M9 9V14M11 10V15M13 11V15' stroke='#605e5c' stroke-width='.9'/></svg>
<div class='a' style='left:1184px;top:298px;width:149px;height:1px;background:#e1dfdd'></div>
<div class='a' style='left:1328px;top:302px;width:4px;height:388px;background:#c8c6c4;border-radius:2px'></div>
<div class='t' style='left:1194px;top:309px;font-size:9.5px;color:#323130'>Values</div>
<div class='a' style='left:1187.5px;top:324.5px;width:140px;height:23px;background:#fff;border:1px dashed #c8c6c4'></div>
<div class='t' style='left:1197px;top:333px;font-size:10px;color:#323130'>Add data fields here</div>
<div class='a' style='left:1190px;top:357px;width:63px;height:11px;background:#f5ef1c;border-radius:1px'></div>
<div class='t' style='left:1194.5px;top:358px;font-size:10px;font-weight:bold;color:#323130;letter-spacing:-0.3px'>Drill through</div>
<div class='t' style='left:1194px;top:380.5px;font-size:10px;color:#323130'>Cross-report</div>
<div class='t' style='left:1194px;top:402.5px;font-size:10px;color:#323130'>Keep all filters</div>
<div class='a' style='left:1288px;top:377.5px;width:26.5px;height:13.5px;background:#fff;border:1px solid #8a8886;border-radius:7px'></div>
<div class='a' style='left:1292.3px;top:381px;width:6.6px;height:6.6px;background:#605e5c;border-radius:50%'></div>
<div class='t' style='left:1300px;top:380.5px;font-size:8.5px;color:#605e5c;letter-spacing:-0.3px'>Off</div>
<div class='a' style='left:1288px;top:400px;width:26.5px;height:13px;background:#117865;border-radius:7px'></div>
<div class='a' style='left:1304px;top:403.2px;width:6.6px;height:6.6px;background:#fff;border-radius:50%'></div>
<div class='t' style='left:1292px;top:402.5px;font-size:8.5px;color:#fff;letter-spacing:-0.4px'>On</div>
<div class='a' style='left:1187.5px;top:421.5px;width:140px;height:320px;border:1px dashed #c8c6c4'></div>
<div class='a' style='left:1190.5px;top:424.3px;width:134px;height:34px;background:#faf9f8;border:1px solid #e6e4e2;border-radius:2px'></div>
<div class='a' style='left:1195px;top:427.8px;width:45px;height:11.5px;background:#f5ef1c;border-radius:1px'></div>
<div class='t' style='left:1197px;top:430.3px;font-size:10px;color:#323130;'>Category</div>
<div class='t' style='left:1197px;top:445.3px;font-size:10px;color:#323130;'>is (All)</div>
<svg class='a' style='left:1275px;top:430.3px' width='46' height='12' viewBox='0 0 46 12'><path d='M2 2.5 L7 7.5 L12 2.5' fill='none' stroke='#605e5c' stroke-width='1'/><path d='M20 2 L26 8 M26 2 L20 8' fill='none' stroke='#605e5c' stroke-width='1'/><path d='M37 3.3 Q37 0.5 39.5 0.5 Q42 0.5 42 3 V4.8 M35.5 4.8 H43.5 V10 H35.5 Z' fill='none' stroke='#605e5c' stroke-width='1'/></svg>
<div class='a' style='left:1190.5px;top:461.4px;width:134px;height:34px;background:#faf9f8;border:1px solid #e6e4e2;border-radius:2px'></div>
<div class='a' style='left:1195px;top:464.9px;width:68px;height:11.5px;background:#f5ef1c;border-radius:1px'></div>
<div class='t' style='left:1197px;top:467.4px;font-size:10px;color:#323130;'>Country_Name</div>
<div class='t' style='left:1197px;top:482.4px;font-size:10px;color:#323130;'>is (All)</div>
<svg class='a' style='left:1275px;top:467.4px' width='46' height='12' viewBox='0 0 46 12'><path d='M2 2.5 L7 7.5 L12 2.5' fill='none' stroke='#605e5c' stroke-width='1'/><path d='M20 2 L26 8 M26 2 L20 8' fill='none' stroke='#605e5c' stroke-width='1'/><path d='M37 3.3 Q37 0.5 39.5 0.5 Q42 0.5 42 3 V4.8 M35.5 4.8 H43.5 V10 H35.5 Z' fill='none' stroke='#605e5c' stroke-width='1'/></svg>
<div class='a' style='left:1190.5px;top:498.5px;width:134px;height:34px;background:#faf9f8;border:1px solid #e6e4e2;border-radius:2px'></div>
<div class='a' style='left:1195px;top:502.0px;width:31px;height:11.5px;background:#f5ef1c;border-radius:1px'></div>
<div class='t' style='left:1197px;top:504.5px;font-size:10px;color:#323130;'>MMM</div>
<div class='t' style='left:1197px;top:519.5px;font-size:10px;color:#323130;'>is (All)</div>
<svg class='a' style='left:1275px;top:504.5px' width='46' height='12' viewBox='0 0 46 12'><path d='M2 2.5 L7 7.5 L12 2.5' fill='none' stroke='#605e5c' stroke-width='1'/><path d='M20 2 L26 8 M26 2 L20 8' fill='none' stroke='#605e5c' stroke-width='1'/><path d='M37 3.3 Q37 0.5 39.5 0.5 Q42 0.5 42 3 V4.8 M35.5 4.8 H43.5 V10 H35.5 Z' fill='none' stroke='#605e5c' stroke-width='1'/></svg>
<div class='a' style='left:1190.5px;top:535.6px;width:134px;height:34px;background:#faf9f8;border:1px solid #e6e4e2;border-radius:2px'></div>
<div class='a' style='left:1195px;top:539.1px;width:66px;height:11.5px;background:#f5ef1c;border-radius:1px'></div>
<div class='t' style='left:1197px;top:541.6px;font-size:10px;color:#323130;'>Product_Name</div>
<div class='t' style='left:1197px;top:556.6px;font-size:10px;color:#323130;'>is (All)</div>
<svg class='a' style='left:1275px;top:541.6px' width='46' height='12' viewBox='0 0 46 12'><path d='M2 2.5 L7 7.5 L12 2.5' fill='none' stroke='#605e5c' stroke-width='1'/><path d='M20 2 L26 8 M26 2 L20 8' fill='none' stroke='#605e5c' stroke-width='1'/><path d='M37 3.3 Q37 0.5 39.5 0.5 Q42 0.5 42 3 V4.8 M35.5 4.8 H43.5 V10 H35.5 Z' fill='none' stroke='#605e5c' stroke-width='1'/></svg>
<div class='a' style='left:1190.5px;top:572.7px;width:134px;height:34px;background:#faf9f8;border:1px solid #e6e4e2;border-radius:2px'></div>
<div class='a' style='left:1195px;top:576.2px;width:37px;height:11.5px;background:#f5ef1c;border-radius:1px'></div>
<div class='t' style='left:1197px;top:578.7px;font-size:10px;color:#323130;'>Quarter</div>
<div class='t' style='left:1197px;top:593.7px;font-size:10px;color:#323130;'>is (All)</div>
<svg class='a' style='left:1275px;top:578.7px' width='46' height='12' viewBox='0 0 46 12'><path d='M2 2.5 L7 7.5 L12 2.5' fill='none' stroke='#605e5c' stroke-width='1'/><path d='M20 2 L26 8 M26 2 L20 8' fill='none' stroke='#605e5c' stroke-width='1'/><path d='M37 3.3 Q37 0.5 39.5 0.5 Q42 0.5 42 3 V4.8 M35.5 4.8 H43.5 V10 H35.5 Z' fill='none' stroke='#605e5c' stroke-width='1'/></svg>
<div class='a' style='left:1190.5px;top:609.8px;width:134px;height:34px;background:#faf9f8;border:1px solid #e6e4e2;border-radius:2px'></div>
<div class='a' style='left:1195px;top:613.3px;width:31px;height:11.5px;background:#f5ef1c;border-radius:1px'></div>
<div class='t' style='left:1197px;top:615.8px;font-size:10px;color:#323130;'>Region</div>
<div class='t' style='left:1197px;top:630.8px;font-size:10px;color:#323130;'>is North Europe</div>
<svg class='a' style='left:1275px;top:615.8px' width='46' height='12' viewBox='0 0 46 12'><path d='M2 2.5 L7 7.5 L12 2.5' fill='none' stroke='#605e5c' stroke-width='1'/><path d='M20 2 L26 8 M26 2 L20 8' fill='none' stroke='#605e5c' stroke-width='1'/><path d='M37 3.3 Q37 0.5 39.5 0.5 Q42 0.5 42 3 V4.8 M35.5 4.8 H43.5 V10 H35.5 Z' fill='none' stroke='#605e5c' stroke-width='1'/></svg>
<div class='a' style='left:1190.5px;top:646.9px;width:134px;height:34px;background:#faf9f8;border:1px solid #e6e4e2;border-radius:2px'></div>
<div class='a' style='left:1195px;top:650.4px;width:28px;height:11.5px;background:#f5ef1c;border-radius:1px'></div>
<div class='t' style='left:1197px;top:652.9px;font-size:10px;color:#323130;'>Year</div>
<div class='t' style='left:1197px;top:667.9px;font-size:10px;color:#323130;'>is (All)</div>
<svg class='a' style='left:1275px;top:652.9px' width='46' height='12' viewBox='0 0 46 12'><path d='M2 2.5 L7 7.5 L12 2.5' fill='none' stroke='#605e5c' stroke-width='1'/><path d='M20 2 L26 8 M26 2 L20 8' fill='none' stroke='#605e5c' stroke-width='1'/><path d='M37 3.3 Q37 0.5 39.5 0.5 Q42 0.5 42 3 V4.8 M35.5 4.8 H43.5 V10 H35.5 Z' fill='none' stroke='#605e5c' stroke-width='1'/></svg>
<div class='a' style='left:1190.5px;top:684.0px;width:134px;height:34px;background:#faf9f8;border:1px solid #e6e4e2;border-radius:2px'></div>
<div class='a' style='left:1195px;top:687.5px;width:29px;height:11.5px;background:#f5ef1c;border-radius:1px'></div>
<div class='t' style='left:1197px;top:690.0px;font-size:10px;color:#323130;font-style:italic;'>Date</div>
<div class='t' style='left:1197px;top:705.0px;font-size:10px;color:#323130;font-style:italic;'>is on or after 1/1/202...</div>
<svg class='a' style='left:1288px;top:690.0px' width='34' height='12' viewBox='0 0 34 12'><path d='M2 2.5 L7 7.5 L12 2.5' fill='none' stroke='#605e5c' stroke-width='1'/><path d='M20 2 L26 8 M26 2 L20 8' fill='none' stroke='#605e5c' stroke-width='1'/></svg>
<div class='a' style='left:1190.5px;top:721.1px;width:134px;height:34px;background:#faf9f8;border:1px solid #e6e4e2;border-radius:2px'></div>
<div class='t' style='left:1197px;top:727.1px;font-size:10px;color:#323130;'>Reference Year</div>
<svg class='a' style='left:1275px;top:727.1px' width='46' height='12' viewBox='0 0 46 12'><path d='M2 2.5 L7 7.5 L12 2.5' fill='none' stroke='#605e5c' stroke-width='1'/><path d='M20 2 L26 8 M26 2 L20 8' fill='none' stroke='#605e5c' stroke-width='1'/><path d='M37 3.3 Q37 0.5 39.5 0.5 Q42 0.5 42 3 V4.8 M35.5 4.8 H43.5 V10 H35.5 Z' fill='none' stroke='#605e5c' stroke-width='1'/></svg>
<div class='a' style='left:1184px;top:728px;width:149px;height:8px;background:#f3f2f1;border-bottom:1px solid #e1dfdd'></div>
<div class='a' style='left:1334px;top:0;width:202px;height:736px;background:#f3f2f1'></div>
<div class='t' style='left:1341px;top:4px;font-size:13px;font-weight:bold;color:#252423;letter-spacing:-0.2px'>Data</div>
<svg class='a' style='left:1526px;top:5px' width='10' height='12' viewBox='0 0 10 12'><path d='M1 1 L10 10 M10 1 L1 10' stroke='#323130' stroke-width='1.1' fill='none'/></svg>
<div class='a' style='left:1338px;top:32px;width:210px;height:19px;background:#fff;border-radius:2px;border:1px solid #e1dfdd;border-bottom:1px solid #8a8886'></div>
<svg class='a' style='left:1346px;top:34px' width='14' height='14' viewBox='0 0 14 14'><circle cx='6' cy='6' r='4.5' fill='none' stroke='#605e5c' stroke-width='1'/><path d='M9.3 9.3 L13 13' stroke='#605e5c' stroke-width='1'/></svg>
<div class='t' style='left:1365px;top:37px;font-size:10.5px;color:#7a7574'>Search</div>
<svg class='a' style='left:1345px;top:63.0px' width='8' height='12' viewBox='0 0 8 12'><path d='M2 1.5 L6 6 L2 10.5' fill='none' stroke='#605e5c' stroke-width='0.9'/></svg>
<svg class='a' style='left:1356.5px;top:62.5px' width='13' height='13' viewBox='0 0 13 13'><rect x='1' y='1' width='9' height='9' rx='1.5' fill='none' stroke='#252423' stroke-width='1.1'/><path d='M4 1V10M7 1V10M1 4H10M1 7H10' stroke='#252423' stroke-width='1'/><rect x='6' y='5.5' width='6' height='7' rx='1' fill='#f3f2f1' stroke='#252423' stroke-width='1'/><path d='M7.5 8H10.5M7.5 10H10.5' stroke='#252423' stroke-width='.8'/></svg>
<div class='t' style='left:1373px;top:65.0px;font-size:10px;color:#3b3a39;letter-spacing:-0.1px'>!Measure</div>
<svg class='a' style='left:1345px;top:82.8px' width='8' height='12' viewBox='0 0 8 12'><path d='M2 1.5 L6 6 L2 10.5' fill='none' stroke='#605e5c' stroke-width='0.9'/></svg>
<svg class='a' style='left:1356.5px;top:82.3px' width='13' height='13' viewBox='0 0 13 13'><rect x='1' y='1' width='10' height='10' rx='1.5' fill='none' stroke='#252423' stroke-width='1.1'/><path d='M4.3 1V11M7.7 1V11M1 4.3H11M1 7.7H11' stroke='#252423' stroke-width='1'/></svg>
<div class='t' style='left:1373px;top:84.8px;font-size:10px;color:#3b3a39;letter-spacing:-0.1px'>Dim_Country</div>
<svg class='a' style='left:1345px;top:102.7px' width='8' height='12' viewBox='0 0 8 12'><path d='M2 1.5 L6 6 L2 10.5' fill='none' stroke='#605e5c' stroke-width='0.9'/></svg>
<svg class='a' style='left:1356.5px;top:102.2px' width='13' height='13' viewBox='0 0 13 13'><rect x='1' y='1' width='10' height='10' rx='1.5' fill='none' stroke='#252423' stroke-width='1.1'/><path d='M4.3 1V11M7.7 1V11M1 4.3H11M1 7.7H11' stroke='#252423' stroke-width='1'/></svg>
<div class='t' style='left:1373px;top:104.7px;font-size:10px;color:#3b3a39;letter-spacing:-0.1px'>Dim_Customer</div>
<svg class='a' style='left:1345px;top:122.6px' width='8' height='12' viewBox='0 0 8 12'><path d='M2 1.5 L6 6 L2 10.5' fill='none' stroke='#605e5c' stroke-width='0.9'/></svg>
<svg class='a' style='left:1356.5px;top:122.1px' width='13' height='13' viewBox='0 0 13 13'><rect x='1' y='1' width='9' height='9' rx='1.5' fill='none' stroke='#252423' stroke-width='1.1'/><path d='M4 1V10M7 1V10M1 4H10M1 7H10' stroke='#252423' stroke-width='1'/><rect x='6' y='5.5' width='6' height='7' rx='1' fill='#f3f2f1' stroke='#252423' stroke-width='1'/><path d='M7.5 8H10.5M7.5 10H10.5' stroke='#252423' stroke-width='.8'/></svg>
<div class='t' style='left:1373px;top:124.6px;font-size:10px;color:#3b3a39;letter-spacing:-0.1px'>Dim_Date</div>
<svg class='a' style='left:1345px;top:142.4px' width='8' height='12' viewBox='0 0 8 12'><path d='M2 1.5 L6 6 L2 10.5' fill='none' stroke='#605e5c' stroke-width='0.9'/></svg>
<svg class='a' style='left:1356.5px;top:141.9px' width='13' height='13' viewBox='0 0 13 13'><rect x='1' y='1' width='10' height='10' rx='1.5' fill='none' stroke='#252423' stroke-width='1.1'/><path d='M4.3 1V11M7.7 1V11M1 4.3H11M1 7.7H11' stroke='#252423' stroke-width='1'/></svg>
<div class='t' style='left:1373px;top:144.4px;font-size:10px;color:#3b3a39;letter-spacing:-0.1px'>Dim_KPI</div>
<svg class='a' style='left:1345px;top:162.2px' width='8' height='12' viewBox='0 0 8 12'><path d='M2 1.5 L6 6 L2 10.5' fill='none' stroke='#605e5c' stroke-width='0.9'/></svg>
<svg class='a' style='left:1356.5px;top:161.8px' width='13' height='13' viewBox='0 0 13 13'><rect x='1' y='1' width='10' height='10' rx='1.5' fill='none' stroke='#252423' stroke-width='1.1'/><path d='M4.3 1V11M7.7 1V11M1 4.3H11M1 7.7H11' stroke='#252423' stroke-width='1'/></svg>
<div class='t' style='left:1373px;top:164.2px;font-size:10px;color:#3b3a39;letter-spacing:-0.1px'>Dim_Product</div>
<svg class='a' style='left:1345px;top:182.1px' width='8' height='12' viewBox='0 0 8 12'><path d='M2 1.5 L6 6 L2 10.5' fill='none' stroke='#605e5c' stroke-width='0.9'/></svg>
<svg class='a' style='left:1356.5px;top:181.6px' width='13' height='13' viewBox='0 0 13 13'><rect x='1' y='1' width='10' height='10' rx='1.5' fill='none' stroke='#252423' stroke-width='1.1'/><path d='M4.3 1V11M7.7 1V11M1 4.3H11M1 7.7H11' stroke='#252423' stroke-width='1'/></svg>
<div class='t' style='left:1373px;top:184.1px;font-size:10px;color:#3b3a39;letter-spacing:-0.1px'>Dim_RefYears</div>
<svg class='a' style='left:1345px;top:202.0px' width='8' height='12' viewBox='0 0 8 12'><path d='M2 1.5 L6 6 L2 10.5' fill='none' stroke='#605e5c' stroke-width='0.9'/></svg>
<svg class='a' style='left:1356.5px;top:201.5px' width='13' height='13' viewBox='0 0 13 13'><rect x='1' y='1' width='10' height='10' rx='1.5' fill='none' stroke='#252423' stroke-width='1.1'/><path d='M4.3 1V11M7.7 1V11M1 4.3H11M1 7.7H11' stroke='#252423' stroke-width='1'/></svg>
<div class='t' style='left:1373px;top:204.0px;font-size:10px;color:#3b3a39;letter-spacing:-0.1px'>Fact_Budget_Sales</div>
<svg class='a' style='left:1345px;top:221.8px' width='8' height='12' viewBox='0 0 8 12'><path d='M2 1.5 L6 6 L2 10.5' fill='none' stroke='#605e5c' stroke-width='0.9'/></svg>
<svg class='a' style='left:1356.5px;top:221.3px' width='13' height='13' viewBox='0 0 13 13'><rect x='1' y='1' width='10' height='10' rx='1.5' fill='none' stroke='#252423' stroke-width='1.1'/><path d='M4.3 1V11M7.7 1V11M1 4.3H11M1 7.7H11' stroke='#252423' stroke-width='1'/></svg>
<div class='t' style='left:1373px;top:223.8px;font-size:10px;color:#3b3a39;letter-spacing:-0.1px'>Fact_Forecast_Sales</div>
<svg class='a' style='left:1345px;top:241.7px' width='8' height='12' viewBox='0 0 8 12'><path d='M2 1.5 L6 6 L2 10.5' fill='none' stroke='#605e5c' stroke-width='0.9'/></svg>
<svg class='a' style='left:1356.5px;top:241.2px' width='13' height='13' viewBox='0 0 13 13'><rect x='1' y='1' width='10' height='10' rx='1.5' fill='none' stroke='#252423' stroke-width='1.1'/><path d='M4.3 1V11M7.7 1V11M1 4.3H11M1 7.7H11' stroke='#252423' stroke-width='1'/></svg>
<div class='t' style='left:1373px;top:243.7px;font-size:10px;color:#3b3a39;letter-spacing:-0.1px'>Fact_Sales</div>
<svg class='a' style='left:1345px;top:261.5px' width='8' height='12' viewBox='0 0 8 12'><path d='M2 1.5 L6 6 L2 10.5' fill='none' stroke='#605e5c' stroke-width='0.9'/></svg>
<svg class='a' style='left:1356.5px;top:261.0px' width='13' height='13' viewBox='0 0 13 13'><rect x='1' y='1' width='9' height='9' rx='1.5' fill='none' stroke='#252423' stroke-width='1.1'/><path d='M4 1V10M7 1V10M1 4H10M1 7H10' stroke='#252423' stroke-width='1'/><rect x='6' y='5.5' width='6' height='7' rx='1' fill='#f3f2f1' stroke='#252423' stroke-width='1'/><path d='M7.5 8H10.5M7.5 10H10.5' stroke='#252423' stroke-width='.8'/></svg>
<div class='t' style='left:1373px;top:263.5px;font-size:10px;color:#3b3a39;letter-spacing:-0.1px'>prm_comparison</div>
<svg class='a' style='left:1345px;top:281.4px' width='8' height='12' viewBox='0 0 8 12'><path d='M2 1.5 L6 6 L2 10.5' fill='none' stroke='#605e5c' stroke-width='0.9'/></svg>
<svg class='a' style='left:1356.5px;top:280.9px' width='13' height='13' viewBox='0 0 13 13'><rect x='1' y='1' width='9' height='9' rx='1.5' fill='none' stroke='#252423' stroke-width='1.1'/><path d='M4 1V10M7 1V10M1 4H10M1 7H10' stroke='#252423' stroke-width='1'/><rect x='6' y='5.5' width='6' height='7' rx='1' fill='#f3f2f1' stroke='#252423' stroke-width='1'/><path d='M7.5 8H10.5M7.5 10H10.5' stroke='#252423' stroke-width='.8'/></svg>
<div class='t' style='left:1373px;top:283.4px;font-size:10px;color:#3b3a39;letter-spacing:-0.1px'>prm_comparison_switch</div>
<div class='a' style='left:0;top:706px;width:1183px;height:30px;background:#f3f2f1'></div>
<div class='a' style='left:100px;top:706px;width:572px;height:30px;background:#fff'></div>
<svg class='a' style='left:4px;top:711px' width='18' height='16' viewBox='0 0 18 16'><rect x='1' y='1.5' width='15' height='9.5' fill='none' stroke='#605e5c' stroke-width='1.1'/><path d='M8.5 11V13.5M5.5 13.5H11.5' stroke='#605e5c' stroke-width='1.1'/></svg>
<div class='a' style='left:3px;top:729px;width:20px;height:2.5px;background:#117865;border-radius:1px'></div>
<svg class='a' style='left:43px;top:709px' width='13' height='20' viewBox='0 0 13 20'><rect x='1' y='1' width='10' height='16.5' rx='1.5' fill='none' stroke='#605e5c' stroke-width='1.1'/><circle cx='6' cy='15' r='.7' fill='#605e5c'/></svg>
<svg class='a' style='left:70px;top:714px' width='30' height='12' viewBox='0 0 30 12'><path d='M6 2 L3 6 L6 10Z' fill='#c8c6c4'/><path d='M22 2 L25 6 L22 10Z' fill='#c8c6c4'/></svg>
<div class='a' style='left:100px;top:706px;width:1px;height:30px;background:#e1dfdd'></div>
<div class='a' style='left:174.5px;top:706px;width:1px;height:30px;background:#e1dfdd'></div>
<div class='a' style='left:277px;top:706px;width:1px;height:30px;background:#e1dfdd'></div>
<div class='a' style='left:386.5px;top:706px;width:1px;height:30px;background:#e1dfdd'></div>
<div class='a' style='left:504.5px;top:706px;width:1px;height:30px;background:#e1dfdd'></div>
<div class='a' style='left:100px;top:706px;width:1px;height:30px;background:#8a8886'></div>
<div class='t' style='left:117px;top:717.5px;font-size:10px;color:#323130'>Overview</div>
<svg class='a' style='left:184.5px;top:717.5px' width='12' height='12' viewBox='0 0 12 12'><path d='M1 6 Q6 1 11 6 Q6 11 1 6Z' fill='none' stroke='#605e5c' stroke-width='.8'/><circle cx='6' cy='6' r='1.8' fill='none' stroke='#605e5c' stroke-width='.8'/><path d='M2 1 L10.5 10.5' stroke='#605e5c' stroke-width='.8'/></svg>
<div class='t' style='left:198.5px;top:717.5px;font-size:10px;color:#323130;'>No Comparison</div>
<svg class='a' style='left:287px;top:717.5px' width='12' height='12' viewBox='0 0 12 12'><path d='M1 6 Q6 1 11 6 Q6 11 1 6Z' fill='none' stroke='#605e5c' stroke-width='.8'/><circle cx='6' cy='6' r='1.8' fill='none' stroke='#605e5c' stroke-width='.8'/><path d='M2 1 L10.5 10.5' stroke='#605e5c' stroke-width='.8'/></svg>
<div class='t' style='left:301px;top:717.5px;font-size:10px;color:#323130;'>Tooltip Customer</div>
<svg class='a' style='left:396px;top:717.5px' width='12' height='12' viewBox='0 0 12 12'><path d='M1 6 Q6 1 11 6 Q6 11 1 6Z' fill='none' stroke='#605e5c' stroke-width='.8'/><circle cx='6' cy='6' r='1.8' fill='none' stroke='#605e5c' stroke-width='.8'/><path d='M2 1 L10.5 10.5' stroke='#605e5c' stroke-width='.8'/></svg>
<div class='t' style='left:410px;top:717.5px;font-size:10px;color:#323130;font-weight:bold;letter-spacing:-0.4px;'>Transaction Details</div>
<div class='a' style='left:386.5px;top:733px;width:118px;height:3px;background:#117865'></div>
<div class='t' style='left:521.5px;top:717.5px;font-size:10px;color:#323130;letter-spacing:-0.2px'>Filter View Core Visuals</div>
<div class='a' style='left:640px;top:706px;width:32px;height:30px;background:#117865'></div>
<svg class='a' style='left:650px;top:715px' width='12' height='12' viewBox='0 0 12 12'><path d='M6 1V11M1 6H11' stroke='#fff' stroke-width='2'/></svg>
</body></html>
